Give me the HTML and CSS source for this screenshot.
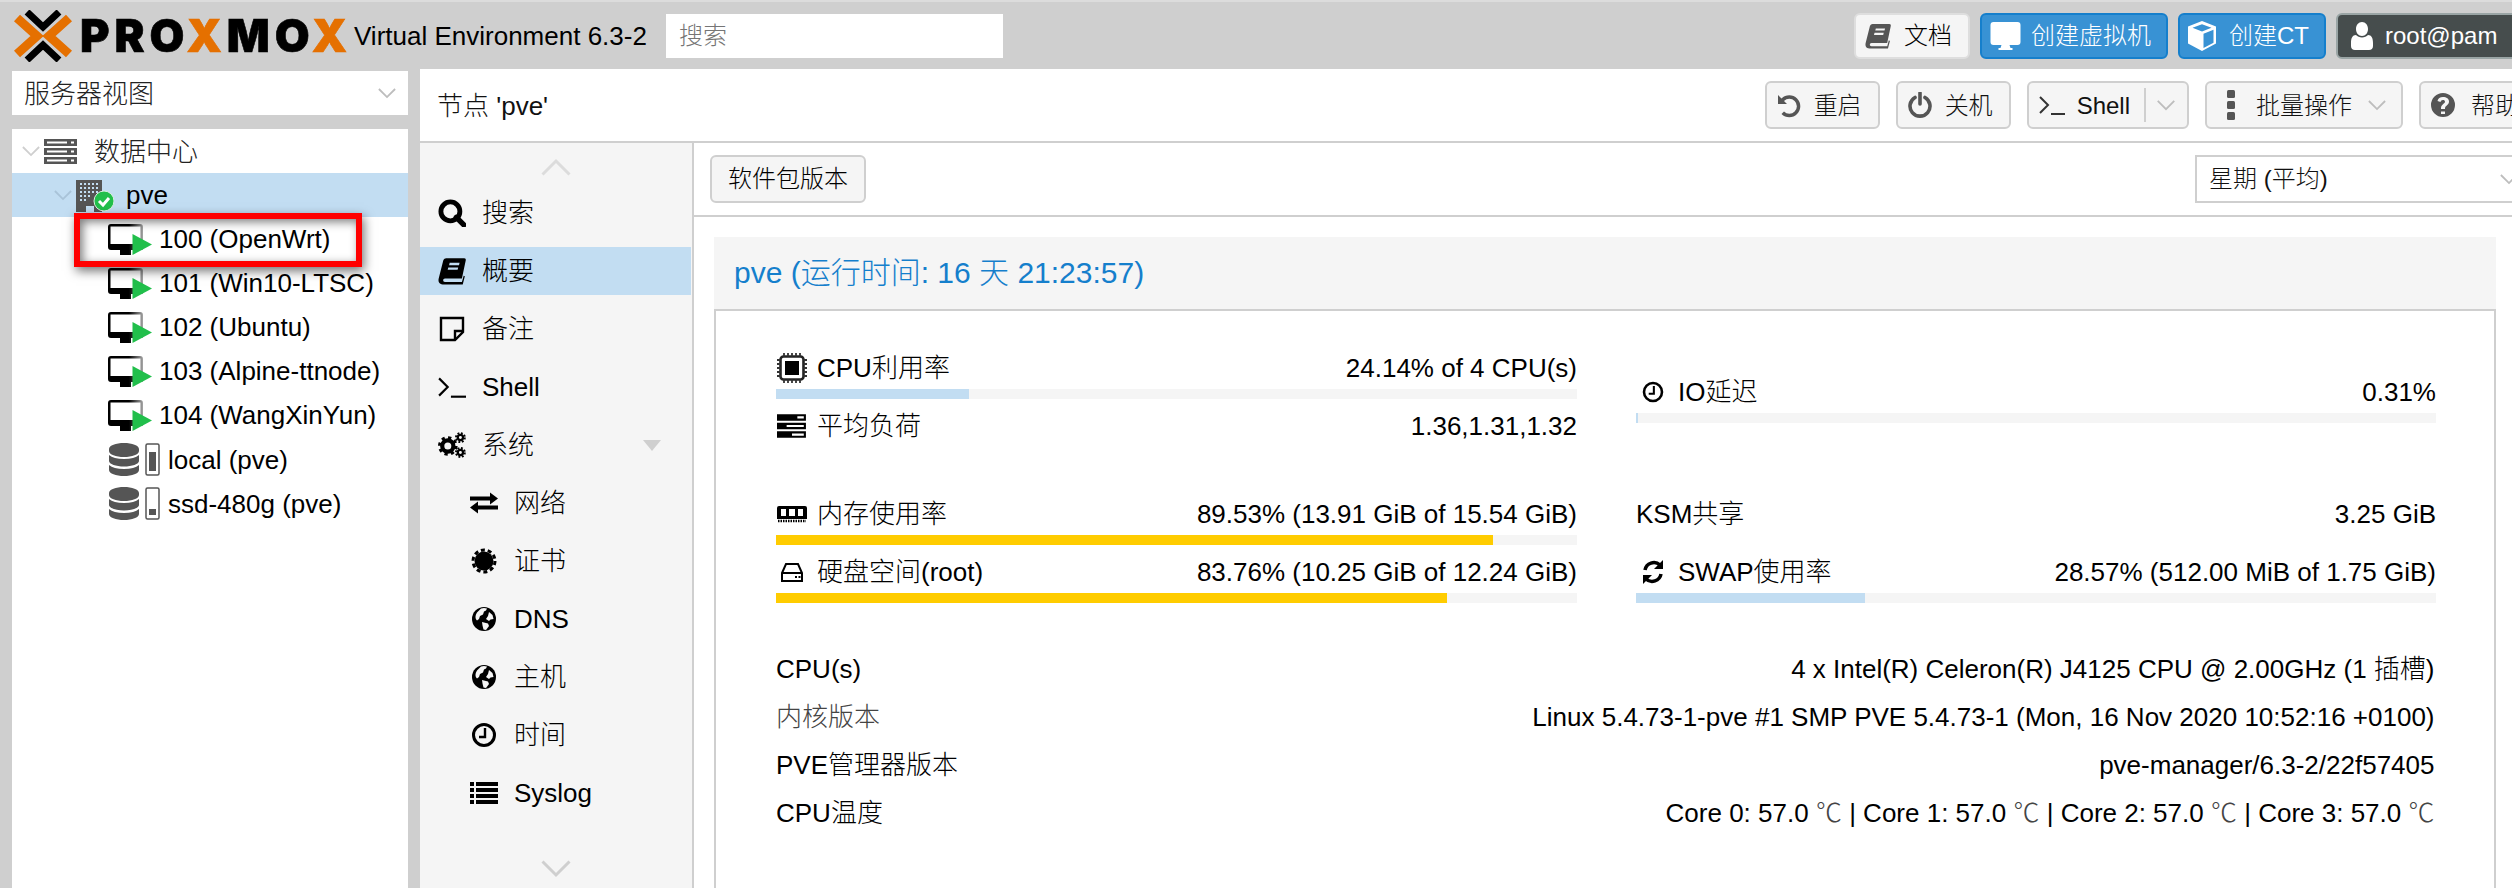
FILE: index.html
```html
<!DOCTYPE html>
<html lang="zh">
<head>
<meta charset="utf-8">
<title>Proxmox VE</title>
<link rel="stylesheet" href="styles.css">
</head>
<body>
<svg class="defs" width="0" height="0">
  <defs>
    <linearGradient id="vm-fade" x1="0" x2="1" y1="0" y2="0"><stop offset="0.6" stop-color="#000"/><stop offset="1" stop-color="#000" stop-opacity=".35"/></linearGradient>
    <symbol id="i-chev" viewBox="0 0 20 12"><path d="M1 1l9 9 9-9" fill="none" stroke="currentColor" stroke-width="2"/></symbol>
    <symbol id="i-book" viewBox="0 0 24 24"><path fill-rule="evenodd" d="M7 1h15.500c1 0 1.500.7 1.300 1.700L20.500 18.500H6c-2 0-2 3 0 3h14.500l1.500-5.500 1 .5-1.800 7H4c-3 0-4-2.500-3.400-5L4.500 3C5 1.700 6 1 7 1zM10 5l-.5 2H18l.5-2zM8.800 9l-.5 2h8.500l.5-2z"/></symbol>
    <symbol id="i-desktop" viewBox="0 0 30 28"><path d="M3 0h24a3 3 0 0 1 3 3v17a3 3 0 0 1-3 3h-8l1 3h2v2H8v-2h2l1-3H3a3 3 0 0 1-3-3V3a3 3 0 0 1 3-3z"/></symbol>
    <symbol id="i-cube" viewBox="0 0 28 30"><path d="M14 0l14 5.500v17L14 30 0 22.500v-17zM14 3.200L4.500 6.700 14 10.500l9.500-3.800zM15.500 27l10-5.300V8.800l-10 4z" fill-rule="evenodd"/></symbol>
    <symbol id="i-user" viewBox="0 0 22 28"><path d="M11 0c3.500 0 6 3 6 7s-2.500 7-6 7-6-3-6-7 2.500-7 6-7zM5 13c1.500 1.500 3.500 2.500 6 2.500s4.500-1 6-2.500c3.500 0 5 3 5 8v3c0 2.500-1.500 4-4 4H4c-2.500 0-4-1.500-4-4v-3c0-5 1.500-8 5-8z"/></symbol>
    <symbol id="i-undo" viewBox="0 0 24 24"><path d="M1 2v9h9L7 8a7.500 7.500 0 1 1 0 10.500l-2.500 2.500A11 11 0 1 0 4.500 5.500z"/></symbol>
    <symbol id="i-power" viewBox="0 0 24 26"><path d="M12 1v11" fill="none" stroke="currentColor" stroke-width="3.600" stroke-linecap="round"/><path d="M7 5.500a10 10 0 1 0 10 0" fill="none" stroke="currentColor" stroke-width="3.600" stroke-linecap="round"/></symbol>
    <symbol id="i-term" viewBox="0 0 26 20"><path d="M1 2l8 8-8 8" fill="none" stroke="currentColor" stroke-width="2"/><path d="M12 18h14v2H12z"/></symbol>
    <symbol id="i-dots" viewBox="0 0 8 30"><rect width="8" height="8" y="0" rx="1.500"/><rect width="8" height="8" y="11" rx="1.500"/><rect width="8" height="8" y="22" rx="1.500"/></symbol>
    <symbol id="i-help" viewBox="0 0 24 24"><path fill-rule="evenodd" d="M12 0a12 12 0 1 1 0 24 12 12 0 0 1 0-24zM10 18.500v2.500h4v-2.500zM12 4C9 4 7 5.500 6.500 8l3 1c.3-1.300 1.200-2 2.400-2 1.300 0 2.100.7 2.100 1.700 0 2-4 2.500-4 6.300v1h4v-.7c0-2.500 4-3 4-6.700C18 5.700 15.500 4 12 4z"/></symbol>
    <symbol id="i-search" viewBox="0 0 26 26"><circle cx="11.500" cy="11.500" r="8.800" fill="none" stroke="currentColor" stroke-width="4.500"/><path d="M17 17l7 7" stroke="currentColor" stroke-width="5" stroke-linecap="round"/></symbol>
    <symbol id="i-note" viewBox="0 0 28 28"><path d="M3 3h22v14l-8 8H3z" fill="none" stroke="currentColor" stroke-width="2.400"/><path d="M17 25v-9h8" fill="none" stroke="currentColor" stroke-width="2.400"/></symbol>
    <symbol id="i-cogs" viewBox="0 0 30 28"><circle cx="10.500" cy="15" r="6" fill="none" stroke="currentColor" stroke-width="4.500"/><circle cx="10.500" cy="15" r="9" fill="none" stroke="currentColor" stroke-width="3" stroke-dasharray="3.500 3.570"/><circle cx="24" cy="6" r="2.800" fill="none" stroke="currentColor" stroke-width="2.400"/><circle cx="24" cy="6" r="4.800" fill="none" stroke="currentColor" stroke-width="2" stroke-dasharray="2 1.770"/><circle cx="24" cy="22" r="2.800" fill="none" stroke="currentColor" stroke-width="2.400"/><circle cx="24" cy="22" r="4.800" fill="none" stroke="currentColor" stroke-width="2" stroke-dasharray="2 1.770"/></symbol>
    <symbol id="i-exch" viewBox="0 0 28 21"><path d="M0 4h20V0l8 6-8 6V8H0z"/><path d="M28 17H8v4l-8-6 8-6v4h20z"/></symbol>
    <symbol id="i-cert" viewBox="0 0 28 28"><circle cx="14" cy="14" r="9.500"/><circle cx="14" cy="14" r="11" fill="none" stroke="currentColor" stroke-width="3" stroke-dasharray="4 2.910"/></symbol>
    <symbol id="i-globe" viewBox="0 0 28 28"><circle cx="14" cy="14" r="12"/><path fill="#f5f5f5" d="M11 3.500c2-.7 4-.7 6 0l-1 2-2 1-1 3-3 1.500-1 3-2 1.500c-2-1.500-2-5 0-8zM19 7l3.500 3 1 4-3 .5-1.500 1.500-3-2 2-3zM12 17l6 1.500 1 2.500-3 4-2.500-.5-1-4z"/></symbol>
    <symbol id="i-clock" viewBox="0 0 28 28"><circle cx="14" cy="14" r="10.500" fill="none" stroke="currentColor" stroke-width="3"/><path d="M15 7v9H9" fill="none" stroke="currentColor" stroke-width="2.400"/></symbol>
    <symbol id="i-list" viewBox="0 0 28 22"><path d="M0 0h4v4H0zM6 0h22v4H6zM0 6h4v4H0zM6 6h22v4H6zM0 12h4v4H0zM6 12h22v4H6zM0 18h4v4H0zM6 18h22v4H6z"/></symbol>
    <symbol id="i-chip" viewBox="0 0 30 30"><rect x="3.500" y="3.500" width="23" height="23" rx="3" fill="none" stroke="#222" stroke-width="2.600"/><rect x="8" y="8" width="14" height="14"/><path d="M0 7h3.500M0 11h3.500M0 15h3.500M0 19h3.500M0 23h3.500M7 0v3.500M11 0v3.500M15 0v3.500M19 0v3.500M23 0v3.500M26.500 7h3.500M26.500 11h3.500M26.500 15h3.500M26.500 19h3.500M26.500 23h3.500M7 26.500v3.500M11 26.500v3.500M15 26.500v3.500M19 26.500v3.500M23 26.500v3.500" stroke="#333" stroke-width="1.800"/></symbol>
    <symbol id="i-load" viewBox="0 0 28 22"><path fill-rule="evenodd" d="M0 0h27v6H0zM0 8h27v6H0zM0 16h27v6H0zM19 2v2h6V2zM9 10v2h16v-2zM14 18v2h11v-2z"/></symbol>
    <symbol id="i-mem" viewBox="0 0 30 30"><path fill-rule="evenodd" d="M2 7h26a2 2 0 0 1 2 2v11H0V9a2 2 0 0 1 2-2zM4 10v7h5v-7zM12 10v7h6v-7zM21 10v7h5v-7z"/><path d="M1 22h28" stroke="currentColor" stroke-width="2.500" stroke-dasharray="1.500 1"/></symbol>
    <symbol id="i-hdd" viewBox="0 0 30 30"><path d="M9 7h12l4 9v8H5v-8zM5 16h20" fill="none" stroke="currentColor" stroke-width="2"/><path d="M18 19h2v2h-2zM21.500 19h2v2h-2z"/></symbol>
    <symbol id="i-refresh" viewBox="0 0 24 26"><path d="M4 11a9 9 0 0 1 15-5" fill="none" stroke="currentColor" stroke-width="3.500"/><path d="M22 1v9h-9z"/><path d="M20 15a9 9 0 0 1-15 5" fill="none" stroke="currentColor" stroke-width="3.500"/><path d="M2 25v-9h9z"/></symbol>
    <symbol id="i-server" viewBox="0 0 33 25"><path fill-rule="evenodd" d="M0 0h33v7H0zM0 9h33v7H0zM0 18h33v7H0zM3 2.500v2h20v-2zM27 2.500v2h3v-2zM3 11.500v2h20v-2zM27 11.500v2h3v-2zM3 20.500v2h20v-2zM27 20.500v2h3v-2z"/></symbol>
    <symbol id="i-node" viewBox="0 0 38 32"><path d="M0 0h26v32H0z" fill="#555"/><path d="M4 4h18M4 8h18M4 12h18M4 16h12M4 20h8" stroke="#c2ddf2" stroke-width="2" stroke-dasharray="2 2"/><path d="M10 26h8v6h-8z" fill="#c2ddf2"/><circle cx="28" cy="21" r="10" fill="#21bf4b" stroke="#d9eee0" stroke-width="1"/><path d="M23 21l4 4 6-7" fill="none" stroke="#fff" stroke-width="3"/></symbol>
    <symbol id="i-vm" viewBox="0 0 44 31"><path fill-rule="evenodd" fill="url(#vm-fade)" d="M3 0h29a3 3 0 0 1 3 3v23H23v5H12v-5H3a3 3 0 0 1-3-3V3a3 3 0 0 1 3-3zM2.500 2.500v17.500h30V2.500z"/><path d="M24.500 10l19.500 10.500L24.500 31z" fill="#21bf4b"/></symbol>
    <symbol id="i-db" viewBox="0 0 30 33"><path d="M15 0c8 0 15 2.500 15 6v2c0 3.500-7 6-15 6S0 11.500 0 8V6c0-3.500 7-6 15-6zM0 12c3 2.500 8 4 15 4s12-1.500 15-4v6c0 3-7 5.500-15 5.500S0 21 0 18zM0 22c3 2.500 8 4 15 4s12-1.500 15-4v5c0 3.500-7 6-15 6S0 30.500 0 27z"/></symbol>
    <symbol id="i-bar-high" viewBox="0 0 15 33"><rect x="1" y="1" width="13" height="31" rx="1.500" fill="none" stroke="currentColor" stroke-width="1.500"/><rect x="4" y="9" width="7" height="19"/></symbol>
    <symbol id="i-bar-low" viewBox="0 0 15 33"><rect x="1" y="1" width="13" height="31" rx="1.500" fill="none" stroke="currentColor" stroke-width="1.500"/><rect x="4" y="22" width="7" height="6"/></symbol>
  </defs>
</svg>
<div class="app">
  <header class="top">
    <div class="logo">
      <svg class="logo-mark" viewBox="0 0 60 52">
        <path d="M4 8l20 18L4 44" fill="none" stroke="#e57000" stroke-width="9"/>
        <path d="M56 8L36 26l20 18" fill="none" stroke="#e57000" stroke-width="9"/>
        <path d="M14 2l16 15L46 2" fill="none" stroke="#000" stroke-width="7"/>
        <path d="M14 50l16-15 16 15" fill="none" stroke="#000" stroke-width="7"/>
      </svg>
      <span class="logo-text">PRO<b>X</b>MO<b>X</b></span>
    </div>
    <span class="version">Virtual Environment 6.3-2</span>
    <div class="search-box">搜索</div>
    <div class="spacer"></div>
    <div class="btn btn-doc"><svg class="ic ic-26 grey"><use href="#i-book"/></svg><span>文档</span></div>
    <div class="btn btn-blue"><svg class="ic ic-30"><use href="#i-desktop"/></svg><span>创建虚拟机</span></div>
    <div class="btn btn-blue"><svg class="ic ic-28"><use href="#i-cube"/></svg><span>创建CT</span></div>
    <div class="btn btn-user"><svg class="ic ic-22"><use href="#i-user"/></svg><span>root@pam</span></div>
  </header>
  <div class="workspace">
    <aside class="left">
      <div class="view-combo"><span>服务器视图</span><svg class="chev"><use href="#i-chev"/></svg></div>
      <div class="tree">
        <div class="row lv0"><svg class="chev tree-chev"><use href="#i-chev"/></svg><svg class="t-server grey"><use href="#i-server"/></svg><span class="t0">数据中心</span></div>
        <div class="row lv1 selected"><svg class="chev tree-chev"><use href="#i-chev"/></svg><svg class="t-node"><use href="#i-node"/></svg><span class="t1">pve</span></div>
        <div class="row lv2"><svg class="t-vm"><use href="#i-vm"/></svg><span>100 (OpenWrt)</span></div>
        <div class="row lv2"><svg class="t-vm"><use href="#i-vm"/></svg><span>101 (Win10-LTSC)</span></div>
        <div class="row lv2"><svg class="t-vm"><use href="#i-vm"/></svg><span>102 (Ubuntu)</span></div>
        <div class="row lv2"><svg class="t-vm"><use href="#i-vm"/></svg><span>103 (Alpine-ttnode)</span></div>
        <div class="row lv2"><svg class="t-vm"><use href="#i-vm"/></svg><span>104 (WangXinYun)</span></div>
        <div class="row lv2"><svg class="t-db grey"><use href="#i-db"/></svg><svg class="t-bar grey"><use href="#i-bar-high"/></svg><span class="t-st">local (pve)</span></div>
        <div class="row lv2"><svg class="t-db grey"><use href="#i-db"/></svg><svg class="t-bar grey"><use href="#i-bar-low"/></svg><span class="t-st">ssd-480g (pve)</span></div>
        <div class="highlight"></div>
      </div>
    </aside>
    <main class="right">
      <div class="titlebar">
        <span class="node-title">节点 'pve'</span>
        <div class="spacer"></div>
        <div class="tools">
          <div class="btn btn-tool"><svg class="ic ic-24 grey"><use href="#i-undo"/></svg><span>重启</span></div>
          <div class="btn btn-tool"><svg class="ic ic-24 grey"><use href="#i-power"/></svg><span>关机</span></div>
          <div class="btn btn-tool btn-shell"><svg class="ic ic-26 dark"><use href="#i-term"/></svg><span>Shell</span><i class="sep"></i><svg class="chev"><use href="#i-chev"/></svg></div>
          <div class="btn btn-tool btn-bulk"><svg class="ic ic-dots grey"><use href="#i-dots"/></svg><span>批量操作</span><svg class="chev"><use href="#i-chev"/></svg></div>
          <div class="btn btn-tool btn-help"><svg class="ic ic-24 grey"><use href="#i-help"/></svg><span>帮助</span></div>
        </div>
      </div>
      <div class="main-row">
        <nav class="nav">
          <svg class="nav-arrow up"><use href="#i-chev"/></svg>
          <div class="nav-item"><svg class="n-ic"><use href="#i-search"/></svg><span>搜索</span></div>
          <div class="nav-item active"><svg class="n-ic"><use href="#i-book"/></svg><span>概要</span></div>
          <div class="nav-item"><svg class="n-ic"><use href="#i-note"/></svg><span>备注</span></div>
          <div class="nav-item"><svg class="n-ic"><use href="#i-term"/></svg><span>Shell</span></div>
          <div class="nav-item"><svg class="n-ic"><use href="#i-cogs"/></svg><span>系统</span><i class="tri"></i></div>
          <div class="nav-item sub"><svg class="n-ic"><use href="#i-exch"/></svg><span>网络</span></div>
          <div class="nav-item sub"><svg class="n-ic"><use href="#i-cert"/></svg><span>证书</span></div>
          <div class="nav-item sub"><svg class="n-ic"><use href="#i-globe"/></svg><span>DNS</span></div>
          <div class="nav-item sub"><svg class="n-ic"><use href="#i-globe"/></svg><span>主机</span></div>
          <div class="nav-item sub"><svg class="n-ic"><use href="#i-clock"/></svg><span>时间</span></div>
          <div class="nav-item sub"><svg class="n-ic"><use href="#i-list"/></svg><span>Syslog</span></div>
          <svg class="nav-arrow down"><use href="#i-chev"/></svg>
        </nav>
        <section class="content">
          <div class="content-bar">
            <div class="btn btn-pkg"><span>软件包版本</span></div>
            <div class="spacer"></div>
            <div class="time-combo"><span>星期 (平均)</span><svg class="chev"><use href="#i-chev"/></svg></div>
          </div>
          <div class="panel-wrap">
            <div class="panel-title">pve (运行时间: 16 天 21:23:57)</div>
            <div class="panel-body">
              <div class="stats">
                <div class="group">
                  <div class="stat"><div class="stat-line"><svg class="s-ic big"><use href="#i-chip"/></svg><span>CPU利用率</span><span class="val">24.14% of 4 CPU(s)</span></div><div class="bar"><div class="fill blue" style="width:24.14%"></div></div></div>
                  <div class="stat"><div class="stat-line"><svg class="s-ic big"><use href="#i-load"/></svg><span>平均负荷</span><span class="val">1.36,1.31,1.32</span></div></div>
                </div>
                <div class="group group-io">
                  <div class="stat"><div class="stat-line"><svg class="s-ic small"><use href="#i-clock"/></svg><span>IO延迟</span><span class="val">0.31%</span></div><div class="bar"><div class="fill blue" style="width:0.31%"></div></div></div>
                </div>
                <div class="group">
                  <div class="stat"><div class="stat-line"><svg class="s-ic big"><use href="#i-mem"/></svg><span>内存使用率</span><span class="val">89.53% (13.91 GiB of 15.54 GiB)</span></div><div class="bar"><div class="fill warn" style="width:89.53%"></div></div></div>
                  <div class="stat"><div class="stat-line"><svg class="s-ic big"><use href="#i-hdd"/></svg><span>硬盘空间(root)</span><span class="val">83.76% (10.25 GiB of 12.24 GiB)</span></div><div class="bar"><div class="fill warn" style="width:83.76%"></div></div></div>
                </div>
                <div class="group">
                  <div class="stat"><div class="stat-line"><span>KSM共享</span><span class="val">3.25 GiB</span></div></div>
                  <div class="stat"><div class="stat-line"><svg class="s-ic small"><use href="#i-refresh"/></svg><span>SWAP使用率</span><span class="val">28.57% (512.00 MiB of 1.75 GiB)</span></div><div class="bar"><div class="fill blue" style="width:28.57%"></div></div></div>
                </div>
              </div>
              <div class="details">
                <div class="detail"><span>CPU(s)</span><span>4 x Intel(R) Celeron(R) J4125 CPU @ 2.00GHz (1 插槽)</span></div>
                <div class="detail"><span class="muted">内核版本</span><span>Linux 5.4.73-1-pve #1 SMP PVE 5.4.73-1 (Mon, 16 Nov 2020 10:52:16 +0100)</span></div>
                <div class="detail"><span>PVE管理器版本</span><span>pve-manager/6.3-2/22f57405</span></div>
                <div class="detail"><span>CPU温度</span><span>Core 0: 57.0 <span class="deg">℃</span> | Core 1: 57.0 <span class="deg">℃</span> | Core 2: 57.0 <span class="deg">℃</span> | Core 3: 57.0 <span class="deg">℃</span></span></div>
              </div>
            </div>
          </div>
        </section>
      </div>
    </main>
  </div>
</div>
</body>
</html>
```

FILE: styles.css
```css
* { box-sizing: border-box; }
html, body { margin: 0; height: 100%; overflow: hidden; }
body {
  background: #cfcfcf;
  color: #000;
  font-family: "Liberation Sans", "Noto Sans CJK SC", sans-serif;
  font-weight: 300;
  font-size: 26px;
  line-height: 30px;
}
svg { fill: currentColor; flex: none; display: block; }
.defs { position: absolute; }
.grey { color: #555; }
.dark { color: #333; }
.spacer { flex: 1; }
.app { width: 2512px; height: 888px; display: flex; flex-direction: column; overflow: hidden; }

.top { height: 69px; flex: none; display: flex; align-items: center; border-top: 2px solid #dcdcdc; }
.logo { display: flex; align-items: center; margin-left: 13px; width: 341px; filter: blur(.5px); }
.logo-mark { width: 60px; height: 52px; }
.logo-text { margin-left: 7px; font-family: Inter, "Liberation Sans", sans-serif; font-weight: 900; font-size: 45px; letter-spacing: 5px; line-height: 52px; -webkit-text-stroke: .6px #000; }
.logo-text b { color: #e57000; font-weight: 900; -webkit-text-stroke: .6px #e57000; }
.version { width: 312px; white-space: nowrap; }
.search-box { width: 337px; height: 44px; background: #fff; color: #757575; font-size: 24px; line-height: 44px; padding-left: 13px; }

.btn { display: flex; align-items: center; height: 46px; border-radius: 6px; font-size: 24px; white-space: nowrap; border: 2px solid #cfcfcf; background: #f5f5f5; }
.top .btn { margin-left: 10px; }
.btn-doc { width: 116px; border-color: #dedede; padding-left: 9px; gap: 13px; }
.btn-blue { background: #3892d4; border-color: #157fcc; color: #fff; padding: 0 15px 0 8px; gap: 10px; }
.btn-blue + .btn-blue { gap: 13px; }
.btn-user { width: 185px; margin-right: -9px; background: #464d4d; border-color: #9aa5a5; color: #fff; padding-left: 13px; gap: 12px; flex: none; }
.ic-22 { width: 22px; height: 28px; }
.ic-24 { width: 24px; height: 26px; }
.ic-26 { width: 26px; height: 26px; }
.ic-28 { width: 28px; height: 30px; }
.ic-30 { width: 31px; height: 28px; }
.ic-dots { width: 8px; height: 30px; }

.workspace { flex: 1; display: flex; min-height: 0; }
.left { width: 420px; flex: none; padding: 2px 12px 0; display: flex; flex-direction: column; gap: 14px; }
.view-combo { height: 44px; flex: none; background: #fff; display: flex; align-items: center; justify-content: space-between; padding: 2px 12px 0 12px; color: #222; }
.view-combo .chev { margin-top: -2px; }
.chev { width: 18px; height: 11px; color: #bdbdbd; }
.tree { flex: 1; background: #fff; position: relative; }
.row { height: 44px; display: flex; align-items: center; white-space: nowrap; }
.selected { background: #c2ddf2; }
.tree-chev { color: #cfcfcf; }
.selected .tree-chev { color: #a9c3d8; }
.lv0 { padding-left: 10px; }
.lv1 { padding-left: 42px; }
.lv2 { padding-left: 96px; }
.t-server { width: 33px; height: 25px; margin-left: 4px; }
.t0 { margin-left: 17px; margin-top: 2px; color: #222; }
.t-node { width: 38px; height: 32px; margin-left: 4px; margin-top: 2px; }
.t1 { margin-left: 12px; }
.t-vm { width: 44px; height: 31px; margin-right: 7px; }
.t-db { width: 30px; height: 33px; margin-left: 1px; }
.t-bar { width: 15px; height: 33px; margin-left: 6px; margin-right: 8px; }
.t-st { margin-top: 2px; }
.highlight { position: absolute; left: 62px; top: 84px; width: 288px; height: 54px; border: 6px solid #f00; box-shadow: 2px 4px 10px rgba(0,0,0,.55), inset 3px 3px 10px rgba(0,0,0,.5); }

.right { flex: 1; min-width: 0; display: flex; flex-direction: column; }
.titlebar { height: 72px; flex: none; background: #fff; display: flex; align-items: center; padding-left: 17px; }
.node-title { color: #111; margin-top: 2px; }
.tools { display: flex; gap: 16px; margin-right: -33px; }
.btn-tool { height: 48px; padding: 0 16px 0 10px; gap: 13px; color: #111; }
.btn-tool span { margin-top: 2px; }
.btn-shell { gap: 12px; padding-right: 11px; }
.btn-shell .sep { width: 2px; height: 34px; background: #cfcfcf; margin-left: 2px; margin-right: -2px; }
.btn-shell .chev { width: 20px; }
.btn-bulk { padding-left: 20px; gap: 21px; padding-right: 15px; }
.btn-bulk .chev { margin-left: -5px; }
.btn-help { width: 126px; gap: 16px; }

.main-row { flex: 1; min-height: 0; display: flex; margin-top: 2px; background: #fff; }
.nav { width: 274px; flex: none; background: #f5f5f5; border-right: 2px solid #cfcfcf; padding-right: 1px; display: flex; flex-direction: column; gap: 10px; }
.nav-arrow { color: #dcdcdc; width: 30px; height: 18px; margin-left: 121px; }
.nav-arrow.up { transform: rotate(180deg); margin-top: 15px; margin-bottom: 3px; }
.nav-arrow.down { margin-top: 33px; color: #cfcfcf; }
.nav-item { height: 48px; flex: none; display: flex; align-items: center; padding-left: 18px; gap: 16px; position: relative; }
.nav-item.sub { padding-left: 50px; }
.nav-item.active { background: #c2ddf2; }
.n-ic { width: 28px; height: 28px; }
.tri { position: absolute; left: 223px; top: 19px; border: 9px solid transparent; border-top: 11px solid #cfcfcf; border-bottom: 0; }

.content { flex: 1; min-width: 0; display: flex; flex-direction: column; }
.content-bar { height: 74px; flex: none; border-bottom: 2px solid #cfcfcf; display: flex; align-items: center; padding-left: 16px; }
.btn-pkg { height: 48px; padding: 0 16px; }
.time-combo { width: 340px; margin-right: -23px; height: 48px; border: 2px solid #cfcfcf; display: flex; align-items: center; justify-content: space-between; padding: 0 15px 0 12px; font-size: 24px; color: #111; }
.panel-wrap { flex: 1; min-height: 0; margin: 20px 16px 0 20px; display: flex; flex-direction: column; }
.panel-title { height: 72px; flex: none; background: #f5f5f5; color: #157fcc; font-size: 30px; line-height: 72px; padding-left: 20px; }
.panel-body { flex: 1; border: 2px solid #cfcfcf; border-bottom: 0; padding: 40px 58px 0 60px; }
.stats { display: grid; grid-template-columns: 801px 800px; column-gap: 59px; row-gap: 30px; }
.group { height: 116px; }
.group-io { padding-top: 24px; }
.stat { height: 58px; }
.stat-line { height: 34px; display: flex; align-items: center; margin-bottom: 4px; white-space: nowrap; }
.stat-line .val { margin-left: auto; }
.s-ic.big { width: 30px; height: 30px; margin-left: 1px; margin-right: 10px; }
.s-ic.small { width: 24px; height: 30px; margin-left: 5px; margin-right: 13px; }
.bar { height: 10px; background: #f5f5f5; }
.fill { height: 100%; }
.fill.blue { background: #c2ddf2; }
.fill.warn { background: #fc0; }
.details { margin-top: 32px; padding-right: 1.500px; }
.detail { height: 48px; display: flex; align-items: center; justify-content: space-between; white-space: nowrap; }
.muted { color: #444; }
.deg { color: #444; }
```
